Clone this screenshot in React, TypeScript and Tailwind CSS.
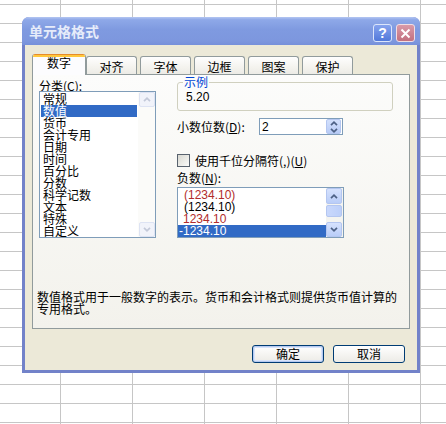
import React from "react";

const CJK = "font-['Noto_Sans_CJK_SC',sans-serif]";
const NUM = "font-['Liberation_Sans','Noto_Sans_CJK_SC',sans-serif]";

function Chev({ up, color }: { up: boolean; color: string }) {
  return (
    <svg width="8" height="5" viewBox="0 0 8 5">
      <path
        d={up ? "M1 4.2L4 1.2L7 4.2" : "M1 0.8L4 3.8L7 0.8"}
        stroke={color}
        strokeWidth="1.7"
        fill="none"
      />
    </svg>
  );
}

const categories = ["常规", "数值", "货币", "会计专用", "日期", "时间", "百分比", "分数", "科学记数", "文本", "特殊", "自定义"];

const negatives = [
  { t: "(1234.10)", cls: "pl-[6px] text-[#b22b2b]" },
  { t: "(1234.10)", cls: "pl-[6px] text-black" },
  { t: "1234.10", cls: "pl-[5px] text-[#b22b2b]" },
  { t: "-1234.10", cls: "pl-[1px] bg-[#316ac5] text-white" },
];

export default function App() {
  return (
    <div className="w-[446px] h-[424px] overflow-hidden bg-white bg-[linear-gradient(to_right,#c6c6c6_1px,transparent_1px),linear-gradient(to_bottom,#c6c6c6_1px,transparent_1px)] bg-[size:72px_19px] bg-[position:60px_4px] pt-[17px] pl-[22px]">
      <div className="w-[398px] h-[356px] flex flex-col rounded-t-[7px] bg-[#7282c9] overflow-hidden">
        {/* Title bar */}
        <div className="h-[28px] shrink-0 flex pl-[7px] pr-[5px] bg-[linear-gradient(to_bottom,#b4c6f2_0%,#8ea8e8_10%,#7f9ae0_45%,#7d97de_85%,#7690da_100%)]">
          <span className={`${CJK} mt-[6px] text-[14px] leading-[16px] font-bold text-[#e6ecfa]`}>单元格格式</span>
          <div className="ml-auto flex gap-[4px] mt-[7px]">
            <div className="w-[19px] h-[18px] rounded-[3px] border border-[#dbe5fb] bg-[linear-gradient(to_bottom,#86a3ee,#5279da)] flex items-center justify-center">
              <span className="font-['Liberation_Sans',sans-serif] font-bold text-[14px] leading-[14px] text-white">?</span>
            </div>
            <div className="w-[19px] h-[18px] rounded-[3px] border border-[#f1dde3] bg-[linear-gradient(to_bottom,#d99aa9,#c2707f)] flex items-center justify-center">
              <svg width="11" height="11" viewBox="0 0 11 11">
                <path d="M1.5 1.5L9.5 9.5M9.5 1.5L1.5 9.5" stroke="white" strokeWidth="2" />
              </svg>
            </div>
          </div>
        </div>

        {/* Body */}
        <div className={`${CJK} flex-1 mx-[3px] mb-[3px] bg-[#ece9d8] flex flex-col px-[7px] pt-[9px] text-[12px] leading-[12px] text-black`}>
          {/* Tabs */}
          <div className="flex items-end h-[20px] relative z-10">
            <div className="w-[54px] h-[21px] -mb-[1px] rounded-t-[3px] overflow-hidden border-x border-[#919b9c] bg-[#fcfcfe] flex flex-col">
              <div className="h-[1px] bg-[#e68b2c]" />
              <div className="h-[2px] bg-[#ffc83c]" />
              <div className="text-center leading-[12px]">数字</div>
            </div>
            {["对齐", "字体", "边框", "图案", "保护"].map((t, i) => (
              <div
                key={t}
                className={`w-[51px] h-[18px] rounded-t-[3px] border-t border-x border-[#919b9c] bg-[linear-gradient(to_bottom,#fefefe,#f4f3ee_60%,#ecebe6)] pt-[4px] text-center ${i === 0 ? "" : "ml-[3px]"}`}
              >
                {t}
              </div>
            ))}
          </div>

          {/* Panel */}
          <div className="h-[255px] border border-[#919b9c] bg-[linear-gradient(to_bottom,#fcfcfb,#f3f2ec)] flex flex-col">
            <div className="flex pl-[6px]">
              {/* Left column */}
              <div className="w-[117px] pt-[5px] flex flex-col">
                <div className="h-[11px] leading-[11px]">
                  分类(<span className="underline">C</span>):
                </div>
                <div className="h-[147px] border border-[#7f9db9] bg-white flex">
                  <div className="flex-1 pt-[1px] px-[1px]">
                    {categories.map((c, i) => (
                      <div
                        key={c}
                        className={`h-[12px] leading-[12px] pl-[2px] ${i === 1 ? "bg-[#316ac5] text-white" : ""}`}
                      >
                        {c}
                      </div>
                    ))}
                  </div>
                  <div className="w-[17px] pl-[1px] flex flex-col bg-[#fbfbf9]">
                    <div className="h-[15px] w-[16px] rounded-[2px] border border-[#dde3f3] bg-[#f1f3fa] flex items-center justify-center">
                      <Chev up color="#c3c9d9" />
                    </div>
                    <div className="flex-1" />
                    <div className="h-[15px] w-[16px] rounded-[2px] border border-[#dde3f3] bg-[#f1f3fa] flex items-center justify-center">
                      <Chev up={false} color="#c3c9d9" />
                    </div>
                  </div>
                </div>
              </div>

              {/* Right column */}
              <div className="ml-[21px] w-[216px] pt-[1px] flex flex-col">
                <fieldset className="h-[35px] border border-[#d0d0bf] rounded-[3px] p-0 m-0">
                  <legend className="ml-[5px] px-[1px] leading-[12px] text-[#0046d5]">示例</legend>
                  <div className={`${NUM} mt-[3px] pl-[8px] text-[12px] leading-[12px]`}>5.20</div>
                </fieldset>

                <div className="mt-[7px] h-[17px] flex items-center">
                  <div className="w-[82px]">
                    小数位数(<span className="underline">D</span>):
                  </div>
                  <div className="w-[84px] h-[17px] border border-[#7f9db9] bg-white flex items-center">
                    <span className={`${NUM} pl-[2px] flex-1`}>2</span>
                    <div className="w-[15px] h-[15px] mr-[1px] rounded-[2px] border border-[#b4c6f0] bg-[linear-gradient(to_bottom,#d3e0fc,#b8ccf7)] flex flex-col items-center justify-center gap-[2px]">
                      <Chev up color="#4d6185" />
                      <Chev up={false} color="#4d6185" />
                    </div>
                  </div>
                </div>

                <div className="mt-[19px] h-[13px] flex items-center">
                  <div className="w-[13px] h-[13px] border border-[#58626e] bg-[linear-gradient(135deg,#d8d8d1,#fbfbf9)]" />
                  <div className="ml-[5px] leading-[13px]">
                    使用千位分隔符(,)(<span className="underline">U</span>)
                  </div>
                </div>

                <div className="mt-[5px] h-[12px]">
                  负数(<span className="underline">N</span>):
                </div>

                <div className="mt-[3px] w-[167px] h-[51px] border border-[#7f9db9] bg-white flex">
                  <div className={`${NUM} flex-1 pt-[1px]`}>
                    {negatives.map((n, i) => (
                      <div key={i} className={`h-[12px] leading-[12px] ${n.cls}`}>
                        {n.t}
                      </div>
                    ))}
                  </div>
                  <div className="w-[17px] pr-[1px] flex flex-col bg-[#f4f4f0]">
                    <div className="h-[16px] rounded-[2px] border border-[#b4c6f0] bg-[linear-gradient(to_bottom,#d6e2fd,#b9cdf8)] flex items-center justify-center">
                      <Chev up color="#4d6185" />
                    </div>
                    <div className="h-[12px] mt-[1px] rounded-[2px] border border-[#b4c6f0] bg-[linear-gradient(to_right,#c9d8fc,#bccff9)]" />
                    <div className="flex-1" />
                    <div className="h-[15px] rounded-[2px] border border-[#b4c6f0] bg-[linear-gradient(to_bottom,#d6e2fd,#b9cdf8)] flex items-center justify-center">
                      <Chev up={false} color="#4d6185" />
                    </div>
                  </div>
                </div>
              </div>
            </div>

            <div className="mt-[53px] pl-[4px] leading-[12px]">
              数值格式用于一般数字的表示。货币和会计格式则提供货币值计算的
              <br />
              专用格式。
            </div>
          </div>

          {/* Buttons */}
          <div className="mt-[16px] flex justify-end gap-[9px] pr-[5px]">
            <div className="w-[72px] h-[18px] rounded-[3px] border border-[#003c74] bg-[linear-gradient(to_bottom,#ffffff,#ecebe6)] shadow-[inset_0_0_0_1px_#b6caf0,inset_0_0_0_2px_#d9e4fa] flex items-center justify-center">
              确定
            </div>
            <div className="w-[72px] h-[18px] rounded-[3px] border border-[#003c74] bg-[linear-gradient(to_bottom,#ffffff,#ecebe6)] flex items-center justify-center">
              取消
            </div>
          </div>
        </div>
      </div>
    </div>
  );
}
